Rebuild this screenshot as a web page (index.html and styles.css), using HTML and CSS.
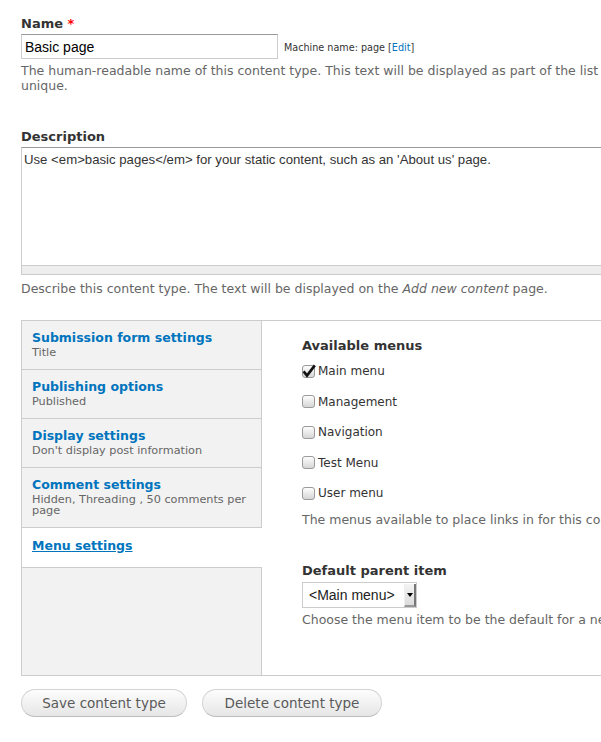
FILE: index.html
```html
<!DOCTYPE html>
<html lang="en">
<head>
<meta charset="utf-8">
<title>Basic page | Content types</title>
<link rel="stylesheet" href="styles.css">
</head>
<body>
<form class="page">
  <div class="form-item">
    <label class="label" for="edit-name">Name <span class="req">*</span></label>
    <div class="name-row">
      <input class="text-input" id="edit-name" type="text" value="Basic page">
      <span class="machine">Machine name: page [<a href="#">Edit</a>]</span>
    </div>
    <div class="description name-desc">The human-readable name of this content type. This text will be displayed as part of the list on the <em>Add new content</em> page. It is recommended that this name begin with a capital letter and contain only letters, numbers, and spaces. This name must be unique.</div>
  </div>

  <div class="form-item desc-item">
    <label class="label" for="edit-description">Description</label>
    <div class="resizable">
      <textarea class="textarea" id="edit-description">Use &lt;em&gt;basic pages&lt;/em&gt; for your static content, such as an 'About us' page.</textarea>
      <div class="grippie"></div>
    </div>
    <div class="description textarea-desc">Describe this content type. The text will be displayed on the <em>Add new content</em> page.</div>
  </div>

  <div class="vtabs">
    <ul class="vtabs-list">
      <li class="vtab"><a class="vtab-link" href="#"><strong class="vtab-title">Submission form settings</strong><span class="vtab-summary">Title</span></a></li>
      <li class="vtab"><a class="vtab-link" href="#"><strong class="vtab-title">Publishing options</strong><span class="vtab-summary">Published</span></a></li>
      <li class="vtab"><a class="vtab-link" href="#"><strong class="vtab-title">Display settings</strong><span class="vtab-summary">Don't display post information</span></a></li>
      <li class="vtab"><a class="vtab-link" href="#"><strong class="vtab-title">Comment settings</strong><span class="vtab-summary">Hidden, Threading , 50 comments per page</span></a></li>
      <li class="vtab selected"><a class="vtab-link" href="#"><strong class="vtab-title">Menu settings</strong></a></li>
    </ul>
    <div class="vtabs-pane">
      <div class="label">Available menus</div>
      <div class="options">
        <label class="option"><span class="cb"><svg class="check" viewBox="0 0 13 13" width="13" height="13"><path d="M1.6 6.4 L5 10.6 L12.8 0.4" /></svg></span>Main menu</label>
        <label class="option"><span class="cb"></span>Management</label>
        <label class="option"><span class="cb"></span>Navigation</label>
        <label class="option"><span class="cb"></span>Test Menu</label>
        <label class="option"><span class="cb"></span>User menu</label>
      </div>
      <div class="description menus-desc">The menus available to place links in for this content type.</div>

      <div class="label parent-label">Default parent item</div>
      <div class="select">
        <span class="select-value">&lt;Main menu&gt;</span>
        <span class="select-btn"><svg viewBox="0 0 6 4" width="6" height="4"><path d="M0 0 H6 L3 4 Z" /></svg></span>
      </div>
      <div class="description select-desc">Choose the menu item to be the default for a new link in the content authoring form.</div>
    </div>
  </div>

  <div class="actions">
    <button class="button save" type="button">Save content type</button>
    <button class="button delete" type="button">Delete content type</button>
  </div>
</form>
</body>
</html>
```

FILE: styles.css
```css
html, body {
  margin: 0;
  padding: 0;
  overflow: hidden;
  background: #fff;
}

body {
  font-family: "DejaVu Sans", "Noto Sans", sans-serif;
  color: #333;
}

.page {
  width: 1597px;
  padding: 16px 0 0 21px;
}

.label {
  display: block;
  font-size: 13px;
  font-weight: bold;
  line-height: 16px;
  margin-bottom: 2px;
  color: #333;
}

.req {
  color: #f00;
}

.name-row {
  display: flex;
  align-items: center;
}

.text-input {
  width: 257px;
  height: 25px;
  box-sizing: border-box;
  margin: 0;
  padding: 0 3px;
  border: 1px solid #ccc;
  border-top-color: #999;
  font: 14px "Liberation Sans", Arial, sans-serif;
  color: #000;
  background: #fff;
  outline: none;
}

.machine {
  font-size: 9.65px;
  margin-left: 6px;
  margin-top: 2px;
  color: #333;
}

.machine a {
  color: #0074bd;
  text-decoration: none;
}

.description {
  font-size: 12.5px;
  line-height: 15px;
  color: #666;
}

.name-desc {
  margin-top: 4px;
}

.desc-item {
  margin-top: 36px;
}

.resizable {
  display: flex;
  flex-direction: column;
}

.textarea {
  display: block;
  height: 118px;
  box-sizing: border-box;
  margin: 0;
  padding: 4px 2px;
  border: 1px solid #ccc;
  border-top-color: #999;
  border-bottom: 0;
  font: 13.2px "Liberation Sans", Arial, sans-serif;
  color: #333;
  resize: none;
  outline: none;
  background: #fff;
}

.grippie {
  height: 10px;
  box-sizing: border-box;
  border: 1px solid #ccc;
  background: #eee;
}

.textarea-desc {
  margin-top: 6px;
}

.vtabs {
  margin-top: 24px;
  display: grid;
  grid-template-columns: 240px 1fr;
  border: 1px solid #ccc;
  background: #f2f2f2;
}

.vtabs-list {
  margin: 0;
  padding: 0;
  list-style: none;
  border-right: 1px solid #ccc;
}

.vtab {
  border-bottom: 1px solid #ccc;
  padding: 9px 10px 11px;
}

.vtab.selected {
  background: #fff;
  margin-right: -1px;
  padding-top: 10px;
  padding-bottom: 13px;
}

.vtab-link {
  display: block;
  text-decoration: none;
}

.vtab-title {
  display: block;
  font-size: 12.5px;
  line-height: 16px;
  font-weight: bold;
  color: #0074bd;
}

.vtab.selected .vtab-title {
  text-decoration: underline;
}

.vtab-summary {
  display: block;
  margin-top: 1px;
  font-size: 11.25px;
  line-height: 11px;
  color: #666;
}

.vtabs-pane {
  background: #fff;
  padding: 17px 0 48px 40px;
}

.options {
  display: flex;
  flex-direction: column;
  gap: 12.5px;
  margin-top: 8px;
}

.option {
  display: flex;
  align-items: center;
  height: 18px;
  font-size: 12px;
  line-height: 18px;
  color: #333;
}

.cb {
  display: inline-flex;
  width: 13px;
  height: 13px;
  box-sizing: border-box;
  margin-right: 3px;
  border: 1px solid #9a9a9a;
  border-radius: 3px;
  background: linear-gradient(#fdfdfd, #d6d6d6);
}

.check {
  flex: none;
  margin: -1px;
  overflow: visible;
}

.check path {
  fill: none;
  stroke: #111;
  stroke-width: 2.6;
  stroke-linejoin: miter;
}

.menus-desc {
  margin-top: 10px;
}

.parent-label {
  margin-top: 36px;
  margin-bottom: 3px;
}

.select {
  display: flex;
  width: 115px;
  height: 26px;
  box-sizing: border-box;
  border: 1px solid #ccc;
  background: #fff;
}

.select-value {
  flex: 1;
  padding-left: 6px;
  font: 14px/24px "Liberation Sans", Arial, sans-serif;
  color: #222;
}

.select-btn {
  display: flex;
  align-items: center;
  justify-content: center;
  width: 12px;
  box-sizing: border-box;
  margin: 1px 0 0;
  border-left: 1px solid #eee;
  border-right: 2px solid #777;
  border-bottom: 2px solid #999;
  background: linear-gradient(#f4f4f4, #dcdcdc);
}

.select-btn path {
  fill: #000;
}

.select-desc {
  margin-top: 4px;
}

.actions {
  display: flex;
  gap: 15px;
  margin-top: 13px;
}

.button {
  height: 28px;
  box-sizing: border-box;
  margin: 0;
  padding: 0;
  border: 1px solid #d4d4d4;
  border-bottom-color: #bdbdbd;
  border-radius: 20px;
  background: linear-gradient(#fdfdfd, #e6e6e6);
  font-family: "DejaVu Sans", sans-serif;
  font-size: 13.5px;
  white-space: nowrap;
  text-align: center;
  color: #5a5a5a;
}

.save {
  width: 166px;
}

.delete {
  width: 180px;
}
```
